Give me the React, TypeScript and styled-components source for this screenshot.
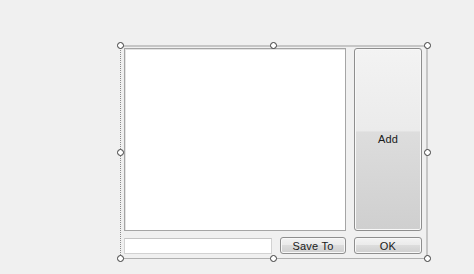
import * as React from 'react';
import styled, { createGlobalStyle } from 'styled-components';

const GlobalStyle = createGlobalStyle`
  html, body {
    margin: 0;
    padding: 0;
    background: #f0f0f0;
  }
  body {
    width: 474px;
    height: 274px;
    overflow: hidden;
    font-family: 'Liberation Sans', 'DejaVu Sans', sans-serif;
  }
`;

const Page = styled.div`
  width: 474px;
  height: 274px;
  padding: 45px 0 0 120px;
  box-sizing: border-box;
  background: #f0f0f0;
`;

// form frame selected in the designer
const Frame = styled.div`
  position: relative;
  width: 308px;
  height: 214px;
  box-sizing: border-box;
  border: 2px solid #c6c6c6;
  border-left: 1px dotted #8c8c8c;
  border-bottom: 1px solid #b0b0b0;
  padding: 1px 4px 3px 3px;
  display: grid;
  grid-template-columns: 148px 66px 68px;
  grid-template-rows: 183px 17px;
  column-gap: 8px;
  row-gap: 6px;
  background: #f0f0f0;
`;

const TextArea = styled.div`
  grid-column: 1 / span 2;
  background: #fff;
  border: 1px solid #a5a5a5;
  box-shadow: inset 1px 1px 0 #e3e3e3;
`;

const TextInput = styled.div`
  background: #fff;
  border: 1px solid #d2d2d2;
  border-top-color: #c4c4c4;
  margin-top: 1px;
`;

const Button = styled.div<{ tall?: boolean }>`
  display: flex;
  align-items: center;
  justify-content: center;
  box-sizing: border-box;
  border: 1px solid #8e8e8e;
  border-radius: 3px;
  box-shadow: inset 0 0 0 1px #f8f8f8;
  background: linear-gradient(
    to bottom,
    #f3f3f3 0%,
    #ebebeb 45%,
    #dddddd 46%,
    #cfcfcf 100%
  );
  font-size: 11px;
  color: #1a1a1a;
  letter-spacing: 0.2px;
  padding-top: ${props => (props.tall ? '0' : '1px')};
  padding-bottom: ${props => (props.tall ? '1px' : '0')};
`;

const Handle = styled.span<{ x: string; y: string }>`
  position: absolute;
  left: ${props => props.x};
  top: ${props => props.y};
  width: 5px;
  height: 5px;
  margin: -4px 0 0 -4px;
  border: 1px solid #3a3a3a;
  border-radius: 50%;
  background: #fff;
`;

const handlePoints: Array<[string, string]> = [
  ['0px', '-1px'],
  ['50%', '-1px'],
  ['calc(100% + 2px)', '-1px'],
  ['0px', '50%'],
  ['calc(100% + 2px)', '50%'],
  ['0px', 'calc(100% + 1px)'],
  ['50%', 'calc(100% + 1px)'],
  ['calc(100% + 2px)', 'calc(100% + 1px)'],
];

export default function App() {
  return (
    <Page>
      <GlobalStyle />
      <Frame>
        <TextArea />
        <Button tall>Add</Button>
        <TextInput />
        <Button>Save To</Button>
        <Button>OK</Button>
        {handlePoints.map(([x, y], i) => (
          <Handle key={'h' + i} x={x} y={y} />
        ))}
      </Frame>
    </Page>
  );
}
